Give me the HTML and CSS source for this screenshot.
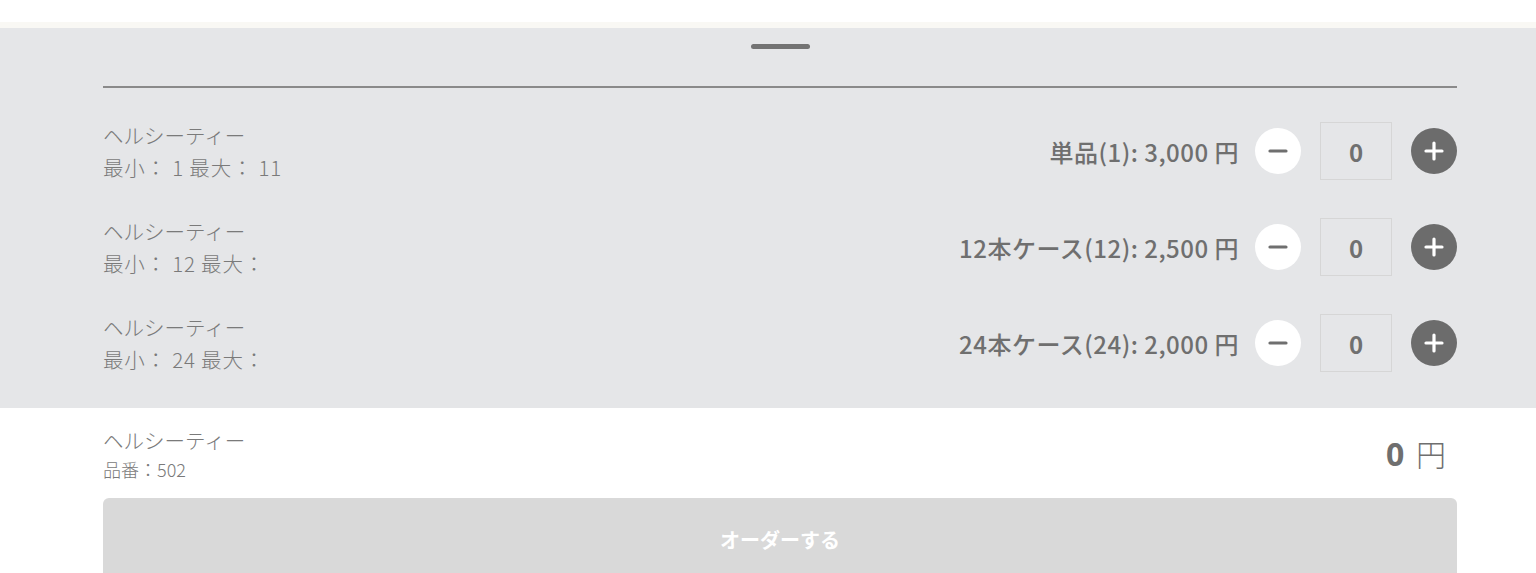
FILE: index.html
```html
<!DOCTYPE html>
<html lang="ja">
<head>
<meta charset="utf-8">
<link rel="stylesheet" href="styles.css">
</head>
<body>
<div class="topbar"></div>
<div class="sheet">
  <div class="panel-inner">
    <div class="handle"></div>
    <div class="divider"></div>
    <div class="rows">
      <div class="row">
        <div class="info">
          <div class="name">ヘルシーティー</div>
          <div class="minmax">最小： 1 最大： 11</div>
        </div>
        <div class="ctrl">
          <span class="price">単品(1): 3,000 円</span>
          <button class="circle minus" aria-label="減らす"><svg viewBox="0 0 46 46" width="46" height="46"><line x1="15" y1="23" x2="31" y2="23" stroke="#6f6f6f" stroke-width="3.2" stroke-linecap="round"/></svg></button>
          <div class="qty">0</div>
          <button class="circle plus" aria-label="増やす"><svg viewBox="0 0 46 46" width="46" height="46"><line x1="15" y1="23" x2="31" y2="23" stroke="#fff" stroke-width="3.2" stroke-linecap="round"/><line x1="23" y1="15" x2="23" y2="31" stroke="#fff" stroke-width="3.2" stroke-linecap="round"/></svg></button>
        </div>
      </div>
      <div class="row">
        <div class="info">
          <div class="name">ヘルシーティー</div>
          <div class="minmax">最小： 12 最大：</div>
        </div>
        <div class="ctrl">
          <span class="price">12本ケース(12): 2,500 円</span>
          <button class="circle minus" aria-label="減らす"><svg viewBox="0 0 46 46" width="46" height="46"><line x1="15" y1="23" x2="31" y2="23" stroke="#6f6f6f" stroke-width="3.2" stroke-linecap="round"/></svg></button>
          <div class="qty">0</div>
          <button class="circle plus" aria-label="増やす"><svg viewBox="0 0 46 46" width="46" height="46"><line x1="15" y1="23" x2="31" y2="23" stroke="#fff" stroke-width="3.2" stroke-linecap="round"/><line x1="23" y1="15" x2="23" y2="31" stroke="#fff" stroke-width="3.2" stroke-linecap="round"/></svg></button>
        </div>
      </div>
      <div class="row">
        <div class="info">
          <div class="name">ヘルシーティー</div>
          <div class="minmax">最小： 24 最大：</div>
        </div>
        <div class="ctrl">
          <span class="price">24本ケース(24): 2,000 円</span>
          <button class="circle minus" aria-label="減らす"><svg viewBox="0 0 46 46" width="46" height="46"><line x1="15" y1="23" x2="31" y2="23" stroke="#6f6f6f" stroke-width="3.2" stroke-linecap="round"/></svg></button>
          <div class="qty">0</div>
          <button class="circle plus" aria-label="増やす"><svg viewBox="0 0 46 46" width="46" height="46"><line x1="15" y1="23" x2="31" y2="23" stroke="#fff" stroke-width="3.2" stroke-linecap="round"/><line x1="23" y1="15" x2="23" y2="31" stroke="#fff" stroke-width="3.2" stroke-linecap="round"/></svg></button>
        </div>
      </div>
    </div>
  </div>
</div>
<div class="footer">
  <div class="summary">
    <div class="info">
      <div class="name">ヘルシーティー</div>
      <div class="code">品番：502</div>
    </div>
    <div class="total"><span class="num">0</span> 円</div>
  </div>
  <button class="order">オーダーする</button>
</div>
</body>
</html>
```

FILE: styles.css
```css
* { box-sizing: border-box; }
html, body { margin: 0; padding: 0; background: #fff; }
body {
  font-family: "Noto Sans CJK JP", sans-serif;
  color: #767676;
  overflow: hidden;
}
.topbar {
  height: 28px;
  background: #fff;
  border-bottom: 6px solid #f9f8f4;
}
.sheet {
  background: #e5e6e8;
  padding: 16px 0 33px;
}
.handle {
  width: 59px;
  height: 5px;
  border-radius: 3px;
  background: #737373;
  margin: 0 auto;
}
.panel-inner {
  margin: 0 79px 0 103px;
}
.divider {
  margin-top: 37px;
  height: 2px;
  background: #8a8a8a;
}
.rows {
  display: flex;
  flex-direction: column;
  gap: 32px;
  padding-top: 31px;
}
.row {
  display: flex;
  align-items: center;
  justify-content: space-between;
  height: 64px;
}
.info {
  display: flex;
  flex-direction: column;
}
.name, .minmax {
  font-size: 20.5px;
  line-height: 32px;
  font-weight: 300;
  color: #7a7a7a;
}
.minmax {
  letter-spacing: 0.8px;
}
.ctrl {
  display: flex;
  align-items: center;
}
.price {
  font-size: 24px;
  font-weight: 500;
  letter-spacing: 0.5px;
  color: #6f6f6f;
  margin-right: 16px;
}
.circle {
  width: 46px;
  height: 46px;
  border-radius: 50%;
  border: 0;
  padding: 0;
  display: flex;
  align-items: center;
  justify-content: center;
}
.minus { background: #fff; }
.plus { background: #6c6c6c; }
.qty {
  width: 72px;
  height: 58px;
  margin: 0 19px;
  border: 1px solid #d6d6d6;
  display: flex;
  align-items: center;
  justify-content: center;
  font-size: 24px;
  font-weight: 700;
  color: #707070;
}
.footer {
  margin: 0 79px 0 103px;
  padding-top: 16px;
}
.summary {
  display: flex;
  justify-content: space-between;
  align-items: center;
}
.footer .name {
  line-height: 32px;
}
.code {
  font-size: 18px;
  line-height: 26px;
  font-weight: 300;
  color: #7a7a7a;
}
.total {
  font-size: 30px;
  font-weight: 300;
  color: #6f6f6f;
  margin-right: 11px;
}
.total .num {
  font-family: "Open Sans", sans-serif;
  font-size: 32px;
  font-weight: 700;
  margin-right: 5px;
}
.order {
  display: block;
  width: 100%;
  height: 84px;
  margin-top: 16px;
  border: 0;
  border-radius: 6px;
  background: #d9d9d9;
  color: #fff;
  font-family: "Noto Sans CJK JP", sans-serif;
  font-size: 20px;
  font-weight: 700;
  padding: 0 0 2px;
}
```
